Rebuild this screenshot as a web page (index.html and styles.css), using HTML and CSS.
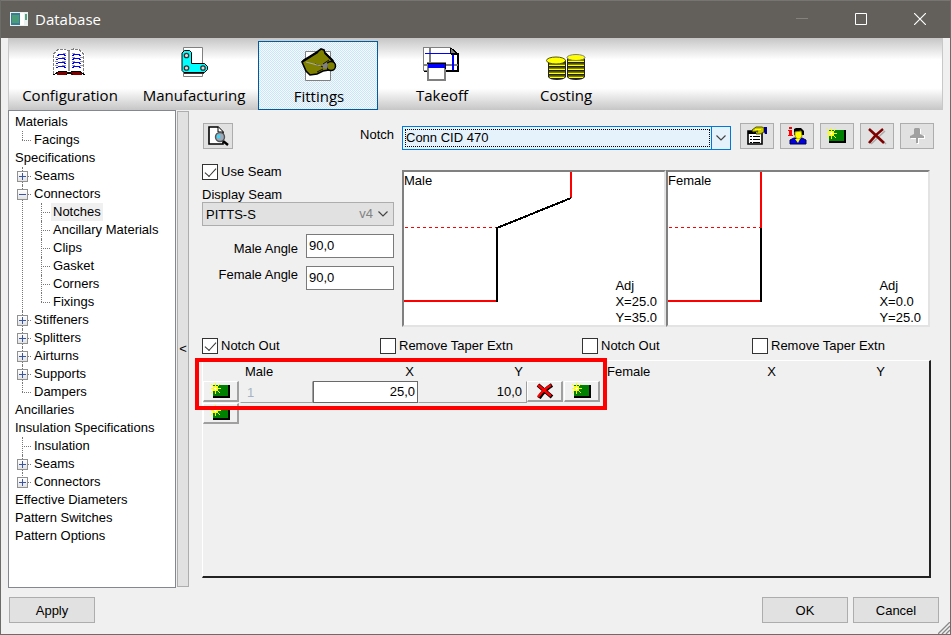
FILE: index.html
```html
<!DOCTYPE html>
<html lang="en">
<head>
<meta charset="utf-8">
<title>Database</title>
<link rel="stylesheet" href="styles.css">
</head>
<body>
<svg class="defs" width="0" height="0" aria-hidden="true">
  <symbol id="new" viewBox="0 0 20 16">
    <path fill="#000" d="M2 2h17v13H2z"/>
    <path fill="#008000" d="M2 2h15v11H2z"/>
    <path stroke="#ff0" fill="none" d="M0 1l9 9M9 1L0 10M4.500 0v11M0 5.500h10"/>
    <path fill="#ff0" d="M2 3h5v5H2z"/>
    <path fill="#fff" d="M3 5h3v1H3zM4 4h1v3H4z"/>
  </symbol>
  <symbol id="chevron" viewBox="0 0 12 8">
    <path d="M1.500 1.500L6 6l4.500-4.500" fill="none" stroke="#444" stroke-width="1.200"/>
  </symbol>
</svg>
<div class="window">
  <header class="titlebar">
    <svg class="app-icon" width="18" height="14" viewBox="0 0 18 14"><path fill="#e8f0f0" d="M0 0h18v14H0z"/><path fill="#3a7c98" d="M1 1h9v12H1z"/><path fill="#4a9c78" d="M2 3h7v8H2z"/><path fill="#fff" d="M10 1h4v12h-4z"/><path fill="#54a080" d="M15 2h2v6h-2z"/></svg>
    <h1>Database</h1>
    <button class="sys" aria-label="Minimize" disabled><svg width="12" height="12"><path stroke="#85827e" d="M0 5.500h12"/></svg></button>
    <button class="sys" aria-label="Maximize"><svg width="12" height="12"><path fill="none" stroke="#fff" d="M.5.500h11v11H.5z"/></svg></button>
    <button class="sys" aria-label="Close"><svg width="12" height="12"><path stroke="#fff" stroke-width="1.200" d="M0 0l12 12M12 0L0 12"/></svg></button>
  </header>

  <nav class="toolbar" aria-label="Sections">
    <button class="tool">
      <svg width="44" height="36" shape-rendering="crispEdges">
        <path fill="#fff" d="M6 7l5-4h5l5 2 5-2h5l6 4v20l-7-2-9 3-8-3-7 2z"/>
        <path fill="none" stroke="#808080" stroke-dasharray="3 1" d="M5.500 28V8l4-4 6-1 5 2 5-2 6 1 4 4v20"/>
        <path fill="none" stroke="#999" stroke-width="2" d="M21 5v20"/>
        <path fill="none" stroke="#00f" d="M9 9.500l3-1h3l3 1M8 13.500l4-1h3l3 1M8 17.500l4-1h3l3 1M8 21.500l4-1h3l3 1M24 9.500l3-1h3l3 1M24 13.500l3-1h3l3 1M24 17.500l3-1h3l3 1M24 21.500l3-1h3l3 1"/>
        <path stroke="#999" d="M7 11.500h3M7 15.500h3M7 19.500h3M32 11.500h3M32 15.500h3M32 19.500h3M24 7.500h3M15 7.500h3M14 11.500h4M14 15.500h4M14 19.500h4M24 11.500h3M24 15.500h3M24 19.500h3"/>
        <path fill="#800000" d="M6 28l6-3h5l4 2 4-2h6l6 3-6 1h-6l-4-1-4 1h-6z"/>
        <path fill="none" stroke="#000" d="M5 29l7-4h5l4 2 4-2h6l6 4M18 29l2-2h3l2 2"/>
      </svg>
      <span>Configuration</span>
    </button>
    <button class="tool">
      <svg width="44" height="36">
        <path fill="#fff" stroke="#808080" d="M11.500 1.500h19v29h-19z"/>
        <path fill="#0ff" stroke="#000" d="M12.500 4.500h5l2 2v11h13l3 3v3l-3 3H12l-2-2V7z"/>
        <path stroke="#333" d="M12 27.500h20"/>
        <g fill="#ddd" stroke="#333" stroke-width="1.300"><circle cx="14.500" cy="9.500" r="2.200"/><circle cx="14.500" cy="22" r="2.200"/><circle cx="31" cy="22" r="2.200"/></g>
      </svg>
      <span>Manufacturing</span>
    </button>
    <button class="tool active" aria-pressed="true">
      <svg width="44" height="36">
        <path fill="#fff" stroke="#808080" d="M8.500 4.500h25v29h-25z"/>
        <path fill="#808000" stroke="#000" stroke-width="1.600" d="M5 15l4 9 4 4 7-1 6-3 6-1 4-1 2-4-2-4-8-8-1-3-3-1-4 3-8 5-5 3z"/>
        <path fill="none" stroke="#000" stroke-width="2" d="M5 15l8-5 8-5M28 6l8 8"/>
        <circle cx="34" cy="19" r="4.500" fill="#808000" stroke="#000" stroke-width="1.500"/>
        <path fill="#808080" d="M25 18l4-3 2 2-1 5-4-1z"/>
        <path fill="none" stroke="#111" d="M18 17l8 3M26 17l6-4M20 25l6-3"/>
        <path fill="none" stroke="#aaa" d="M9 15l15 4"/>
      </svg>
      <span>Fittings</span>
    </button>
    <button class="tool">
      <svg width="44" height="36" shape-rendering="crispEdges">
        <path fill="#fff" stroke="#808080" d="M3.500 1.500h27l8 7v16h-35z"/>
        <path fill="#808080" d="M30 1l8 7h-8z"/>
        <path fill="none" stroke="#000" stroke-width="2" d="M31 8h7v17H24"/>
        <path fill="none" stroke="#000" d="M30.500 2v6M31 2l7 6M4 25.500h4"/>
        <path stroke="#808080" stroke-width="2" d="M10 2v15M4 19h34"/>
        <path stroke="#00f" d="M5 7.500h25"/><path stroke="#00f" stroke-width="2" d="M33 9v15"/>
        <path fill="#fff" stroke="#808080" stroke-width="2" d="M8 17h17v17H8z"/>
        <path fill="#00f" d="M8 17h17v5H8z"/><path stroke="#000" fill="none" d="M7 17.500h18.500v5"/>
      </svg>
      <span>Takeoff</span>
    </button>
    <button class="tool">
      <svg width="44" height="36">
        <path fill="#222" d="M4 14h18v17q-2 3-9 3t-9-3zM23 11h18v20q-2 3-9 3t-9-3z"/>
        <path fill="none" stroke="#808000" stroke-width="2" d="M5 18.500h16M5 22.500h16M5 26.500h16M5 30.500h16M24 14.500h16M24 18.500h16M24 22.500h16M24 26.500h16M24 30.500h16"/>
        <path fill="none" stroke="#ff0" d="M5 19.500h16M5 23.500h16M5 27.500h16M6 31.500h14M24 15.500h16M24 19.500h16M24 23.500h16M24 27.500h16M25 31.500h14"/>
        <ellipse cx="12" cy="14.500" rx="9.500" ry="3.500" fill="#ff0" stroke="#555500"/>
        <ellipse cx="32" cy="11.500" rx="9" ry="3" fill="#ff0" stroke="#808080"/>
      </svg>
      <span>Costing</span>
    </button>
  </nav>

  <main class="main">
    <nav class="tree" aria-label="Database sections">
      <ul>
        <li><a href="#">Materials</a>
          <ul><li><a href="#">Facings</a></li></ul></li>
        <li><a href="#">Specifications</a>
          <ul>
            <li><button class="toggle" aria-label="Expand Seams"></button><a href="#">Seams</a></li>
            <li><button class="toggle open" aria-label="Collapse Connectors"></button><a href="#">Connectors</a>
              <ul>
                <li><a href="#" class="selected">Notches</a></li>
                <li><a href="#">Ancillary Materials</a></li>
                <li><a href="#">Clips</a></li>
                <li><a href="#">Gasket</a></li>
                <li><a href="#">Corners</a></li>
                <li><a href="#">Fixings</a></li>
              </ul></li>
            <li><button class="toggle" aria-label="Expand Stiffeners"></button><a href="#">Stiffeners</a></li>
            <li><button class="toggle" aria-label="Expand Splitters"></button><a href="#">Splitters</a></li>
            <li><button class="toggle" aria-label="Expand Airturns"></button><a href="#">Airturns</a></li>
            <li><button class="toggle" aria-label="Expand Supports"></button><a href="#">Supports</a></li>
            <li><a href="#">Dampers</a></li>
          </ul></li>
        <li><a href="#">Ancillaries</a></li>
        <li><a href="#">Insulation Specifications</a>
          <ul>
            <li><a href="#">Insulation</a></li>
            <li><button class="toggle" aria-label="Expand insulation Seams"></button><a href="#">Seams</a></li>
            <li><button class="toggle" aria-label="Expand insulation Connectors"></button><a href="#">Connectors</a></li>
          </ul></li>
        <li><a href="#">Effective Diameters</a></li>
        <li><a href="#">Pattern Switches</a></li>
        <li><a href="#">Pattern Options</a></li>
      </ul>
    </nav>
    <button class="splitter" aria-label="Collapse tree">&lt;</button>

    <section class="editor">
      <div class="picker">
        <button class="btn preview" aria-label="Preview">
          <svg width="22" height="20"><path fill="#fff" stroke="#000" stroke-width="1.600" d="M2 1h9l5 5v12H2z"/><path fill="#fff" stroke="#000" d="M11 1v5h5"/><path stroke="#000" stroke-width="2.500" d="M16 15l5 4"/><circle cx="13" cy="11" r="4.500" fill="#9ab" stroke="#555" stroke-width="1.400"/><path fill="#3df" d="M10 9h3v3h-3z"/></svg>
        </button>
        <label for="notch">Notch</label>
        <div class="combo">
          <select id="notch"><option>Conn CID 470</option></select>
          <svg class="combo-arrow" width="12" height="8"><use href="#chevron"/></svg>
        </div>
        <div class="actions">
          <button class="btn" aria-label="Properties"><svg width="22" height="20"><path fill="#fff" stroke="#000" stroke-width="1.600" d="M2 5h14v13H2z"/><path fill="#000" d="M2 5h8v3H2z"/><path stroke="#000" d="M4 10.500h2M7 10.500h7M4 13.500h2M7 13.500h7M4 16.500h2M7 16.500h7"/><path fill="#cc0" stroke="#550" d="M6 4l4-3h6l2 1v4l-4 2h-4l2-3-5 1z"/><path fill="#ff0" d="M9 3h6v1H9z"/><path fill="#000080" d="M18 1h3v7h-2l-1-2z"/></svg></button>
          <button class="btn" aria-label="User information"><svg width="22" height="20"><path fill="red" d="M3 1h3v2H3zM2 4h4v5h1v1H2V9h1V5H2z"/><path fill="#0000e0" stroke="#000040" d="M4 18v-4l4-2h8l4 2v4z"/><path fill="#000" d="M8 3l2-1h5l3 3v4H8z"/><path fill="#ff0" stroke="#990" d="M9 6l6-1 1 5-2 3h-3l-2-3z"/><path fill="#ff0" d="M9 13h5l-2 4z"/></svg></button>
          <button class="btn" aria-label="New"><svg width="20" height="16"><use href="#new"/></svg></button>
          <button class="btn" aria-label="Delete"><svg width="20" height="18"><path stroke="#aaa" stroke-width="1.500" d="M4 3l15 14M18 4L4 17"/><path fill="none" stroke="#800000" stroke-width="2.500" d="M2 2l15 14M16 2Q8 8 2 16"/></svg></button>
          <button class="btn" aria-label="Pin" disabled><svg width="20" height="18"><path fill="#fff" d="M8 2h6v6h4v4h-6v5h-2v-5H4V8h4z"/><path fill="#a0a0a0" d="M7 2l1-1h4l1 1v5l4 2v2h-6v5H9v-5H3V9l4-2z"/></svg></button>
        </div>
      </div>

      <div class="details">
        <div class="seam">
          <label class="check"><input type="checkbox" checked>Use Seam</label>
          <label class="seam-label" for="seam">Display Seam</label>
          <div class="seam-select">
            <select id="seam"><option>PITTS-S</option></select>
            <span class="version">v4 <svg width="12" height="8"><use href="#chevron"/></svg></span>
          </div>
          <div class="angles">
            <div class="angle-labels"><label for="male-angle">Male Angle</label><label for="female-angle">Female Angle</label></div>
            <div class="angle-inputs"><input id="male-angle" type="text" value="90,0"><input id="female-angle" type="text" value="90,0"></div>
          </div>
        </div>
        <figure class="view">
          <svg width="260" height="153" shape-rendering="crispEdges"><path stroke="red" stroke-dasharray="3 3" d="M1 55.500h92"/><path stroke="red" stroke-width="2" d="M167 0v26M0 129h92"/><path fill="none" stroke="#000" stroke-width="2" d="M167 26L93 56v74"/></svg>
          <figcaption>Male</figcaption>
          <p>Adj<br>X=25.0<br>Y=35.0</p>
        </figure>
        <figure class="view">
          <svg width="260" height="153" shape-rendering="crispEdges"><path stroke="red" stroke-dasharray="3 3" d="M1 55.500h92"/><path stroke="red" stroke-width="2" d="M93 0v56M0 129h92"/><path stroke="#000" stroke-width="2" d="M93 56v74"/></svg>
          <figcaption>Female</figcaption>
          <p>Adj<br>X=0.0<br>Y=25.0</p>
        </figure>
      </div>

      <div class="options">
        <label class="check"><input type="checkbox" checked>Notch Out</label>
        <label class="check"><input type="checkbox">Remove Taper Extn</label>
        <label class="check"><input type="checkbox">Notch Out</label>
        <label class="check"><input type="checkbox">Remove Taper Extn</label>
      </div>

      <div class="points">
        <table>
          <colgroup><col class="c-btn"><col class="c-male"><col class="c-x"><col class="c-y"><col class="c-btn"><col class="c-add"><col class="c-female"><col class="c-x"><col class="c-y"><col></colgroup>
          <thead>
            <tr><th></th><th class="name">Male</th><th>X</th><th>Y</th><th></th><th></th><th class="name">Female</th><th>X</th><th>Y</th><th></th></tr>
          </thead>
          <tbody>
            <tr>
              <td><button class="cell-btn" aria-label="Insert before"><svg width="20" height="16"><use href="#new"/></svg></button></td>
              <td><span class="index">1</span></td>
              <td><input class="value editing" type="text" value="25,0" aria-label="X"></td>
              <td><input class="value" type="text" value="10,0" aria-label="Y"></td>
              <td><button class="cell-btn" aria-label="Delete point"><svg width="20" height="16"><path fill="none" stroke="#000" stroke-width="4" d="M3 2l14 12M17 2Q9 7 4 15"/><path fill="none" stroke="red" stroke-width="2.500" d="M3 2l13 11M16 2Q8 7 3 14"/></svg></button></td>
              <td><button class="cell-btn" aria-label="Insert after"><svg width="20" height="16"><use href="#new"/></svg></button></td>
              <td></td><td></td><td></td><td></td>
            </tr>
            <tr>
              <td><button class="cell-btn" aria-label="Add point"><svg width="20" height="16"><use href="#new"/></svg></button></td>
              <td></td><td></td><td></td><td></td><td></td><td></td><td></td><td></td><td></td>
            </tr>
          </tbody>
        </table>
        <div class="highlight"></div>
      </div>
    </section>
  </main>

  <footer class="footer">
    <button class="btn wide apply">Apply</button>
    <button class="btn wide">OK</button>
    <button class="btn wide">Cancel</button>
    <svg class="grip" width="12" height="12"><path stroke="#fff" stroke-width="1" d="M1 12L12 1M5 12l7-7M9 12l3-3"/><path stroke="#888" stroke-width="1.400" d="M0 12L12 0M4 12l8-8M8 12l4-4"/></svg>
  </footer>
</div>
</body>
</html>
```

FILE: styles.css
```css
* { box-sizing: border-box; }
body {
  margin: 0;
  font: 13px/16px "Liberation Sans", Arial, sans-serif;
  color: #000;
  background: #f0f0f0;
}
button, input, select { font: inherit; color: inherit; margin: 0; padding: 0; border-radius: 0; }
button { display: flex; align-items: center; justify-content: center; }
svg { display: block; flex: none; }
.defs { position: absolute; }

.window {
  position: relative;
  min-height: 100vh;
  display: flex;
  flex-direction: column;
  border: 1px solid #6e6c68;
  border-top: 0;
}

/* Title bar */
.titlebar { display: flex; align-items: center; height: 38px; padding: 0 1px 2px 9px; background: #63605b; border-top: 1px solid #777571; color: #fff; }
.titlebar h1 { flex: 1; margin: 0 0 0 7px; font: 15px/20px "Open Sans", sans-serif; }
.sys { width: 59px; height: 34px; border: 0; background: none; }

/* Section toolbar */
.toolbar {
  display: flex;
  gap: 4px;
  height: 72px;
  margin: 0 7px;
  padding: 3px 1px 0;
  border: solid #c8c8c8;
  border-width: 0 1px;
  background: linear-gradient(#c6c6c6, #fff 30%, #fff 70%, #c6c6c6);
}
.tool {
  flex: 0 0 120px;
  flex-direction: column;
  justify-content: flex-start;
  gap: 3px;
  padding-top: 4px;
  border: 1px solid transparent;
  background: none;
  font: 15px/20px "Open Sans", sans-serif;
}
.tool.active { padding: 5px 0 0 2px; border-color: #005a9e; background: repeating-conic-gradient(#cce4f7 0 25%, #f4f9fd 0 50%) 0 0 / 2px 2px; }

/* Layout */
.main { flex: 1; display: flex; padding-left: 7px; }
.tree { flex: 0 0 168px; padding: 2px 0 0 6px; border: 1px solid #828790; background: #fff; }
.splitter { flex: 0 0 12px; margin: 1px 0 1px 1px; border: 1px solid #adadad; background: #e1e1e1; }
.editor { flex: 1; min-width: 0; display: flex; flex-direction: column; padding: 13px 16px 10px 13px; }

/* Tree */
.tree ul { margin: 0; padding: 0; list-style: none; }
.tree li { position: relative; line-height: 18px; }
.tree a { display: inline-block; height: 18px; color: inherit; text-decoration: none; white-space: nowrap; vertical-align: top; }
.tree .selected { background: #f0f0f0; margin: 0 -2px; padding: 0 2px; }
.tree li li { padding-left: 19px; }
.tree li li::before { content: ""; position: absolute; left: 7px; top: 0; bottom: 0; border-left: 1px dotted #777; }
.tree li li:last-child::before { bottom: auto; height: 9px; }
.tree li li::after { content: ""; position: absolute; left: 7px; top: 9px; width: 9px; border-top: 1px dotted #777; }
.toggle {
  position: absolute;
  z-index: 1;
  left: 2px;
  top: 4px;
  width: 11px;
  height: 11px;
  border: 1px solid #919191;
  background:
    linear-gradient(#3b56a0, #3b56a0) center / 7px 1px no-repeat,
    linear-gradient(#3b56a0, #3b56a0) center / 1px 7px no-repeat,
    linear-gradient(#fff, #e2e2e2);
}
.toggle.open { background: linear-gradient(#3b56a0, #3b56a0) center / 7px 1px no-repeat, linear-gradient(#fff, #e2e2e2); }

/* Controls */
.btn { width: 34px; height: 26px; border: 1px solid #adadad; background: #e1e1e1; }
.preview { width: 30px; }
.wide { width: 86px; padding-top: 1px; }
.check { display: flex; align-items: center; gap: 3px; line-height: 18px; height: 16px; white-space: nowrap; }
.check input { appearance: none; width: 16px; height: 16px; border: 1px solid #333; background: #fff; }
.check input:checked::after { content: ""; display: block; width: 10px; height: 5px; margin: 3px 0 0 2px; border: solid #333; border-width: 0 0 1px 1px; transform: rotate(-48deg); }

/* Notch picker */
.picker { display: flex; align-items: center; height: 26px; padding-left: 1px; }
.picker > label { flex: 0 0 161px; margin-right: 8px; padding-bottom: 2px; text-align: right; }
.combo { flex: 1; display: flex; align-items: center; height: 24px; margin-top: 3px; border: 1px solid #0078d7; background: #e5f1fb; }
.combo select { flex: 1; min-width: 0; height: 18px; margin: 0 1px 0 2px; appearance: none; border: 1px dotted #000; background: none; outline: 0; }
.combo-arrow { box-sizing: content-box; padding: 7px 3px; border-left: 1px solid #0078d7; }
.actions { display: flex; gap: 6px; margin-left: 9px; }

/* Seam settings and profile views */
.details { display: grid; grid-template-columns: 192px 1fr 1fr; margin: 15px 4px 0 0; }
.details { grid-template-columns: 200px 1fr 1fr; }
.seam { display: flex; flex-direction: column; width: 192px; }
.seam-label { margin-top: 6px; line-height: 18px; height: 16px; }
.seam-select { position: relative; }
.seam-select select { display: block; width: 100%; height: 24px; padding: 1px 0 0 3px; appearance: none; border: 1px solid #adadad; background: #e1e1e1; }
.version { position: absolute; right: 5px; top: 4px; display: flex; align-items: center; gap: 4px; color: #838383; pointer-events: none; }
.angles { display: flex; justify-content: flex-end; gap: 8px; margin-top: 8px; }
.angle-labels, .angle-inputs { display: flex; flex-direction: column; }
.angle-labels { gap: 10px; padding-top: 7px; text-align: right; }
.angle-inputs { gap: 8px; }
.angle-inputs input { width: 88px; height: 24px; padding: 0 2px 2px; border: 1px solid #7a7a7a; background: #fff; }
.view {
  display: grid;
  height: 157px;
  margin: 6px 0 0;
  border: 2px solid;
  border-color: #808080 #e3e3e3 #e3e3e3 #808080;
  background: #fff;
}
.view > * { grid-area: 1 / 1; }
.view figcaption { place-self: start; padding-top: 1px; }
.view p { place-self: end; margin: 0 7px -1px 0; }

/* Notch options */
.options { display: grid; grid-template-columns: 178px 202px 170px 1fr; margin-top: 11px; }

/* Point table */
.points {
  position: relative;
  flex: 1;
  margin: 6px 3px 0 0;
  border: 1px solid #fff;
  border-right: 2px solid #222;
  border-bottom: 2px solid #222;
}
table { width: 100%; border-collapse: collapse; table-layout: fixed; }
th, td { height: 22px; padding: 0; font-weight: normal; vertical-align: top; }
th { height: 20px; padding: 3px 4px 0 0; text-align: right; white-space: nowrap; }
th.name { padding: 3px 0 0 5px; text-align: left; }
.c-btn { width: 37px; }
.c-male { width: 73px; }
.c-x { width: 105px; }
.c-y { width: 109px; }
.c-add { width: 38px; }
.c-female { width: 73px; }
.cell-btn { width: 36px; height: 21px; border: 2px solid; border-color: #fff #a0a0a0 #a0a0a0 #fff; border-left-width: 1px; border-top-width: 1px; background: #f0f0f0; }
.index, .value { display: block; width: 100%; height: 22px; padding: 3px 2px; border: 1px solid; border-color: #f0f0f0 #a0a0a0 #a0a0a0 #f0f0f0; background: #f0f0f0; }
.index { padding-left: 6px; color: #a5b4c4; }
.value { padding: 0 4px 2px 2px; text-align: right; }
.value.editing { padding-right: 2px; border-color: #696969; background: #fff; }
.highlight { position: absolute; left: -8px; top: -3px; width: 412px; height: 52px; border: 4px solid red; pointer-events: none; }

/* Footer */
.footer { display: flex; gap: 5px; padding: 9px 11px 11px 8px; }
.apply { margin-right: auto; }
.grip { position: absolute; right: 0; bottom: 0; }
```
